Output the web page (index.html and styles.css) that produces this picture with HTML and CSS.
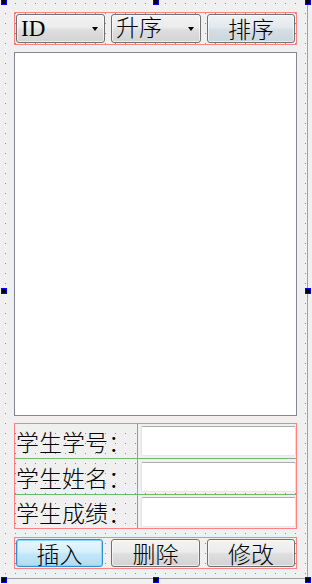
FILE: index.html
```html
<!DOCTYPE html>
<html lang="zh-CN">

<head>
  <meta charset="UTF-8">
  <meta name="viewport" content="width=device-width, initial-scale=1.0">
  <title>学生管理</title>
  <link rel="stylesheet" href="styles.css">
</head>

<body>
  <div class="designer">
    <div class="form">
      <div class="toolbar">
        <div class="combo combo-field"><span>ID</span><i class="arrow"></i></div>
        <div class="combo combo-order"><span>升序</span><i class="arrow"></i></div>
        <button class="btn btn-hot btn-sort">排序</button>
      </div>

      <div class="list"></div>

      <div class="fields">
        <label class="cell-label">学生学号：</label>
        <div class="cell-edit"><input class="edit" type="text"></div>
        <label class="cell-label row-sep">学生姓名：</label>
        <div class="cell-edit row-sep"><input class="edit" type="text"></div>
        <label class="cell-label row-sep">学生成绩：</label>
        <div class="cell-edit row-sep"><input class="edit" type="text"></div>
      </div>

      <div class="actions">
        <button class="btn btn-default btn-insert">插入</button>
        <button class="btn btn-delete">删除</button>
        <button class="btn btn-edit">修改</button>
      </div>
    </div>

    <!-- selection handles -->
    <span class="handle h-tl"></span>
    <span class="handle h-tm"></span>
    <span class="handle h-tr"></span>
    <span class="handle h-ml"></span>
    <span class="handle h-mr"></span>
    <span class="handle h-bl"></span>
    <span class="handle h-bm"></span>
    <span class="handle h-br"></span>
  </div>
</body>

</html>
```

FILE: styles.css
```css
* {
  margin: 0;
  padding: 0;
  box-sizing: border-box;
}

body {
  background: #f0f0f0;
  font-family: "Noto Sans CJK SC", sans-serif;
  color: #000;
  overflow: hidden;
}

.designer {
  position: relative;
  width: 312px;
  height: 584px;
}

/* Form */
.form {
  position: relative;
  z-index: 0;
  margin-left: 4px;
  width: 304px;
  height: 579px;
  padding: 12px 10px 0 10px;
  border-right: 1px solid #a0a0a0;
  border-bottom: 1px solid #a0a0a0;
  display: flex;
  flex-direction: column;
}

/* designer dot grid */
.form::before {
  content: "";
  position: absolute;
  inset: 0;
  z-index: -1;
  background-image: linear-gradient(90deg, #8c8c8c 1px, transparent 1px);
  background-size: 10px 10px;
  background-position: 1px 0;
  -webkit-mask-image: linear-gradient(#000 1px, transparent 1px);
  -webkit-mask-size: 10px 10px;
  -webkit-mask-position: 0 3px;
  mask-image: linear-gradient(#000 1px, transparent 1px);
  mask-size: 10px 10px;
  mask-position: 0 3px;
}

/* Toolbar */
.toolbar {
  height: 33px;
  padding: 1px;
  border: 1px solid #ff8080;
  display: flex;
}

.combo {
  flex: none;
  display: flex;
  align-items: center;
  justify-content: space-between;
  padding: 0 6px 0 4px;
  border: 1px solid #707070;
  border-radius: 3px;
  background: linear-gradient(#f3f3f3, #ececec 45%, #dedede 55%, #d3d3d3);
  box-shadow: inset 0 0 0 1px rgba(255, 255, 255, 0.6);
  font-family: "Liberation Serif", "Noto Sans CJK SC", serif;
  font-size: 23px;
  font-weight: 300;
  line-height: 1;
}

.combo-field { width: 89px; }
.combo-order { width: 90px; margin-left: 6px; }
.btn-sort { width: 88px; margin-left: 6px; }

.arrow {
  width: 0;
  height: 0;
  border-left: 3.5px solid transparent;
  border-right: 3.5px solid transparent;
  border-top: 4px solid #000;
}

.btn {
  flex: none;
  border: 1px solid #707070;
  border-radius: 3px;
  background: linear-gradient(#f3f3f3, #ececec 45%, #dedede 55%, #d3d3d3);
  box-shadow: inset 0 0 0 1px rgba(255, 255, 255, 0.6);
  font-family: "Noto Sans CJK SC", sans-serif;
  font-size: 23px;
  font-weight: 300;
  line-height: 1;
  color: #000;
}

.btn-hot {
  background: linear-gradient(#edf2f5, #e3e9ee 45%, #d5dee4 55%, #cbd5dc);
}

.btn-default {
  border-color: #2c8fd6;
  background: linear-gradient(#e8f6fd, #d8f0fc 45%, #c3e7f9 55%, #aedcf4);
  box-shadow: inset 0 0 0 1px #8fd6f8;
}

/* List */
.list {
  height: 364px;
  margin: 7px 0;
  border: 1px solid #828790;
  background: #fff;
}

/* Fields */
.fields {
  display: grid;
  grid-template-columns: 123px 1fr;
  grid-template-rows: 34px 36px 34px;
  border: 1px solid #ff8080;
  margin-bottom: 8px;
}

.cell-label {
  display: flex;
  align-items: center;
  padding-left: 1px;
  border-right: 1px solid #70b870;
  font-size: 23px;
  font-weight: 300;
  white-space: nowrap;
}

.cell-edit {
  display: flex;
  align-items: center;
  padding-left: 3px;
}

.row-sep {
  border-top: 1px solid #70b870;
}

.edit {
  flex: 1;
  width: 100%;
  height: 30px;
  border: 1px solid;
  border-color: #abadb3 #dbdfe6 #e3e9ef #e2e3ea;
  border-radius: 2px;
  background: #fff;
  outline: none;
}

/* Actions */
.actions {
  height: 32px;
  padding: 1px;
  border: 1px solid #ff8080;
  display: flex;
}

.btn-insert { width: 87px; }
.btn-delete { width: 89px; margin-left: 8px; }
.btn-edit { width: 88px; margin-left: 7px; }

/* Selection handles */
.handle {
  position: absolute;
  width: 6px;
  height: 6px;
  border: 1px solid #0000ff;
  background: #000;
}

.h-tl { left: 1px; top: -1px; }
.h-tm { left: 153px; top: -1px; }
.h-tr { left: 305px; top: -1px; }
.h-ml { left: 1px; top: 288px; }
.h-mr { left: 305px; top: 288px; }
.h-bl { left: 1px; top: 577px; }
.h-bm { left: 153px; top: 577px; }
.h-br { left: 305px; top: 577px; }
```
